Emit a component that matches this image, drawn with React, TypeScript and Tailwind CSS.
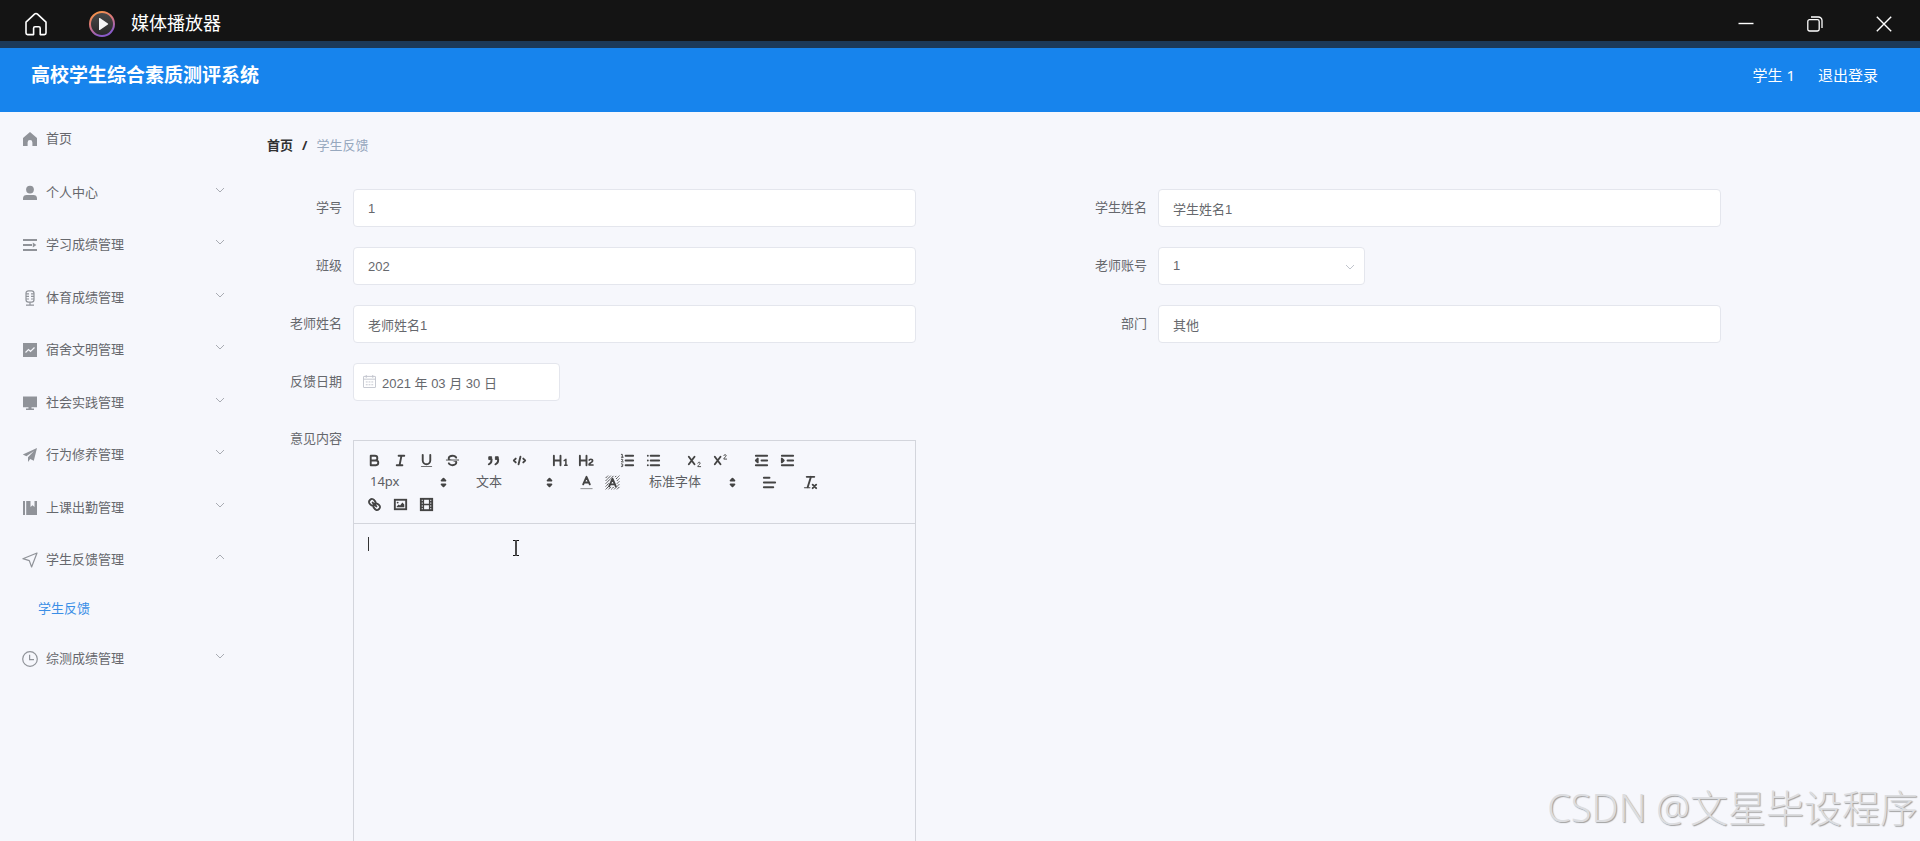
import type { ReactNode } from "react";

const menuIcons: Record<string, ReactNode> = {
  home: <path fill="currentColor" d="M8 1 1 7v8h4.600v-3.600a2.400 2.400 0 0 1 4.800 0V15H15V7z" />,
  user: (
    <g fill="currentColor">
      <circle cx="8" cy="4.600" r="3.900" />
      <path d="M1 15v-1.500C1 11 2.500 10 4.500 10h7c2 0 3.500 1 3.500 3.500V15z" />
    </g>
  ),
  list: (
    <g fill="currentColor">
      <path d="M1 2h14v2H1zM1 12h14v2H1zM1 7h9v2H1zM10.800 5.400 14.400 8l-3.600 2.600z" />
    </g>
  ),
  mic: (
    <g fill="none" stroke="currentColor" strokeWidth="1.200">
      <rect x="4" y=".8" width="8" height="11.400" rx="2.400" />
      <path d="M4 3.800h3M4 6.400h3M4 9h3M12 3.800H9M12 6.400H9M12 9H9M8 12.200v3M4 15.200h8" />
    </g>
  ),
  chart: (
    <g>
      <path fill="currentColor" d="M1 1h14v14H1z" />
      <path fill="none" stroke="#f6f7fc" strokeWidth="1.200" d="m3.500 10.500 3-3 2 2 4-4" />
    </g>
  ),
  screen: <path fill="currentColor" d="M1 1.500h14v10.700H1zM6.500 12h3v1.600H12V15H4v-1.400h2.500z" />,
  plane: <path fill="currentColor" d="M15 1 .8 7.600l3.600 1.700L12 4 6 10.200V15l2.200-3 3.600 1.700z" />,
  book: <path fill="currentColor" d="M1 1h2v14H1zM4.200 1h4.300v6l2-1.700 2 1.700V1H15v14H4.200z" />,
  send: (
    <path fill="none" stroke="currentColor" strokeWidth="1.200" strokeLinejoin="round" d="M15 1 .9 6.700l6.400 1.900L9.600 15z" />
  ),
  clock: (
    <g fill="none" stroke="currentColor" strokeWidth="1.200">
      <circle cx="8" cy="8" r="7.300" />
      <path d="M7.600 3.800v4.800H12" />
    </g>
  ),
};

const menu = [
  { label: "个人中心", icon: "user" },
  { label: "学习成绩管理", icon: "list" },
  { label: "体育成绩管理", icon: "mic" },
  { label: "宿舍文明管理", icon: "chart" },
  { label: "社会实践管理", icon: "screen" },
  { label: "行为修养管理", icon: "plane" },
  { label: "上课出勤管理", icon: "book" },
  { label: "学生反馈管理", icon: "send", open: true },
];

function MenuIcon({ name }: { name: string }) {
  return (
    <svg viewBox="0 0 16 16" className="h-4 w-4 shrink-0 text-[#909399]" aria-hidden="true">
      {menuIcons[name]}
    </svg>
  );
}

function Chevron({ up = false, className = "" }: { up?: boolean; className?: string }) {
  return (
    <svg viewBox="0 0 10 6" className={`h-[6px] w-[10px] ${className}`} fill="none" stroke="currentColor" aria-hidden="true">
      <path d={up ? "M1 5 5 1l4 4" : "m1 1 4 4 4-4"} />
    </svg>
  );
}

function MenuItem({ label, icon, open = false }: { label: string; icon: string; open?: boolean }) {
  return (
    <button type="button" className="flex h-full w-full items-center gap-2 pr-[18px] pl-[22px] text-left">
      <MenuIcon name={icon} />
      <span className="flex-1">{label}</span>
      <Chevron up={open} className="mb-[6px] text-[#a9acb3]" />
    </button>
  );
}

function Field({ id, label, children }: { id: string; label: string; children: ReactNode }) {
  return (
    <div className="flex">
      <label htmlFor={id} className="w-[92px] shrink-0 pr-[11px] text-right leading-[38px]">
        {label}
      </label>
      {children}
    </div>
  );
}

const boxClass = "h-[38px] rounded-[4px] border border-[#e4e6ed] bg-white text-[#66686d] outline-none";

function TextField({ id, label, value }: { id: string; label: string; value: string }) {
  return (
    <Field id={id} label={label}>
      <input id={id} defaultValue={value} className={`w-[563px] min-w-0 px-[14px] ${boxClass}`} />
    </Field>
  );
}

const S = { fill: "none", stroke: "currentColor", strokeWidth: 2, strokeLinecap: "round", strokeLinejoin: "round" } as const;
const T = { ...S, strokeWidth: 1 } as const;

const tools: Record<string, ReactNode> = {
  bold: <path {...S} d="M5 4h4.500a2.500 2.500 0 0 1 0 5H5zM5 9h5.500a2.500 2.500 0 0 1 0 5H5z" />,
  italic: <path {...S} d="M7 4h6M5 14h6M8 14l2-10" />,
  underline: (
    <>
      <path {...S} d="M5 3v6a4 4 0 0 0 8 0V3" />
      <rect x="3" y="15" width="12" height="1" rx=".5" fill="currentColor" />
    </>
  ),
  strike: (
    <>
      <path {...T} d="M15.500 8.500h-13" />
      <path
        fill="currentColor"
        d="M9.007 8C6.542 7.791 6 7.519 6 6.500 6 5.792 7.283 5 9 5c1.571 0 2.765.679 2.969 1.309a1 1 0 0 0 1.900-.617C13.356 4.106 11.354 3 9 3 6.200 3 4 4.538 4 6.500a3.200 3.200 0 0 0 .5 1.843ZM8.984 10C11.457 10.208 12 10.479 12 11.500c0 .708-1.283 1.500-3 1.500-1.571 0-2.765-.679-2.969-1.309a1 1 0 1 0-1.900.617C4.644 13.894 6.646 15 9 15c2.800 0 5-1.538 5-3.500a3.200 3.200 0 0 0-.5-1.843Z"
      />
    </>
  ),
  quote: (
    <>
      <path fill="currentColor" stroke="currentColor" d="M4 5h3v3H4zM11 5h3v3h-3z" />
      <path {...S} d="M7 8c0 4.031-3 5-3 5M14 8c0 4.031-3 5-3 5" />
    </>
  ),
  code: <path {...S} d="m5 7-2 2 2 2M13 7l2 2-2 2M10 5 8 13" />,
  h1: (
    <path
      fill="currentColor"
      d="M10 4v10a1 1 0 0 1-2 0v-4H3v4a1 1 0 0 1-2 0V4a1 1 0 0 1 2 0v4h5V4a1 1 0 0 1 2 0Zm6.068 9.209H15.500V7.600c0-.3-.24-.6-.68-.6-.34 0-1.960 1.300-2.500 1.700-.5.400-.2 1.200.5 1.200.3 0 .7-.3 1.100-.6v3.909h-.6a.8.8 0 0 0 0 1.580h2.748a.8.8 0 0 0 0-1.580Z"
    />
  ),
  h2: (
    <path
      fill="currentColor"
      d="M16.740 13.810a.7.7 0 0 1-.8.700h-4.100c-.7 0-1-.3-1-.9 0-2.700 3.600-2.900 3.600-4.300a.8.8 0 0 0-.9-.8c-1 0-.9.900-1.600.900a.85.85 0 0 1-.9-.8c0-.9 1.200-1.700 2.600-1.700 1.500 0 2.700.9 2.700 2.300 0 2-2.700 2.700-3.200 3.800h2.800c.5 0 .8.300.8.800ZM9 3a1 1 0 0 0-1 1v4H3V4a1 1 0 0 0-2 0v10a1 1 0 0 0 2 0v-4h5v4a1 1 0 0 0 2 0V4a1 1 0 0 0-1-1Z"
    />
  ),
  ordered: (
    <>
      <path {...S} d="M7 4h8M7 9h8M7 14h8" />
      <path {...T} d="M2.500 2.500h1v3M2.500 5.500h2M2.500 7.700c1.800-.8 2.300.8 0 2.800h2M2.500 12.500c2-.3 2 1.500.500 1.500 2 0 1.500 2-.5 1.500" />
    </>
  ),
  bullet: <path {...S} d="M6 4h9M6 9h9M6 14h9M3 4h0M3 9h0M3 14h0" />,
  sub: (
    <>
      <path {...S} d="m3 5 6 8M9 5l-6 8" />
      <path {...T} d="M12.500 11.800c.3-1.400 2.600-1.300 2.500.1 0 1-2.300 1.900-2.500 3.600H15.500" />
    </>
  ),
  sup: (
    <>
      <path {...S} d="m3 5 6 8M9 5l-6 8" />
      <path {...T} d="M12.500 3.800c.3-1.400 2.600-1.300 2.500.1 0 1-2.300 1.900-2.500 3.600H15.500" />
    </>
  ),
  outdent: (
    <>
      <path {...S} d="M3 14h12M3 4h12M9 9h6" />
      <path fill="currentColor" stroke="currentColor" strokeWidth="2" strokeLinejoin="round" d="M5 7v4L3 9z" />
    </>
  ),
  indent: (
    <>
      <path {...S} d="M3 14h12M3 4h12M9 9h6" />
      <path fill="currentColor" stroke="currentColor" strokeWidth="2" strokeLinejoin="round" d="M3 7v4l2-2z" />
    </>
  ),
  color: (
    <>
      <path {...T} opacity=".6" d="M3 15.500h12" />
      <path {...S} d="M5.500 11 9 3l3.500 8M11.600 9H6.400" />
    </>
  ),
  background: (
    <>
      <path
        {...T}
        strokeDasharray="1 1"
        d="M2 4 4 2M2 7l5-5M2 10 10 2M2 13l3-3M2 16l3-3M5 16l2-2M8 16l2-2M11 16l5-5M14 16l2-2M12 3l1-1M13 5l3-3M14 7l2-2M14 10l2-2"
      />
      <path {...S} d="M5.500 13 9 5l3.500 8M11.600 11H6.400" />
    </>
  ),
  align: <path {...S} d="M3 9h12M3 14h10M3 4h6" />,
  clean: (
    <>
      <path {...S} d="M5 3h8M6 14 9.500 3M11.300 11.300l3.700 3.700M15 11.300 11.300 15" />
      <rect x="2" y="14" width="7" height="1" rx=".5" fill="currentColor" />
    </>
  ),
  link: (
    <g {...S}>
      <path d="m7 7 4 4" />
      <path d="M8.900 4.577a3.476 3.476 0 0 1 .36 4.679A3.476 3.476 0 0 1 4.577 8.900C3.185 7.500 2.035 6.400 4.217 4.217S7.500 3.185 8.900 4.577Z" />
      <path d="M13.423 9.100a3.476 3.476 0 0 0-4.679-.36 3.476 3.476 0 0 0 .36 4.679c1.392 1.392 2.500 2.542 4.679.36s1.031-3.279-.36-4.679Z" />
    </g>
  ),
  image: (
    <>
      <rect {...S} x="3" y="4" width="12" height="10" strokeLinejoin="miter" />
      <circle cx="6" cy="7" r="1" fill="currentColor" />
      <path fill="currentColor" d="M5 12v-1l2-2 1.500 1L11 7l2 2v3z" />
    </>
  ),
  video: (
    <>
      <rect {...S} x="3" y="3" width="12" height="12" strokeLinejoin="miter" />
      <path {...T} strokeWidth="1.500" d="M5.700 3v12M12.300 3v12M6 9h6M3 6h2M3 9h2M3 12h2M13 6h2M13 9h2M13 12h2" />
    </>
  ),
};

function Tools({ names }: { names: string[] }) {
  return (
    <div className="flex">
      {names.map((name) => (
        <button key={name} type="button" aria-label={name} className="flex h-[22px] w-[26px] items-center justify-center">
          <svg viewBox="0 0 18 18" className="h-[17px] w-[17px]">
            {tools[name]}
          </svg>
        </button>
      ))}
    </div>
  );
}

function Picker({ label, value, width }: { label: string; value: string; width: string }) {
  return (
    <div className={`relative h-[22px] ${width}`}>
      <select aria-label={label} className="h-5 w-full appearance-none bg-transparent pl-[9px] text-[#5c5e63] outline-none">
        <option>{value}</option>
      </select>
      <svg viewBox="0 0 18 18" className="pointer-events-none absolute top-[3px] right-0 h-[17px] w-[17px]">
        <path fill="currentColor" stroke="currentColor" strokeWidth="2" strokeLinejoin="round" d="m7 11 2 2 2-2zM7 7l2-2 2 2z" />
      </svg>
    </div>
  );
}

function Editor() {
  return (
    <div className="w-[563px] border border-[#d3d5dc]">
      <div className="border-b border-[#d3d5dc] px-[7px] py-2 font-['Noto_Sans','Noto_Sans_CJK_SC',sans-serif] text-[#444]">
        <div className="flex gap-[15px]">
          <Tools names={["bold", "italic", "underline", "strike"]} />
          <Tools names={["quote", "code"]} />
          <Tools names={["h1", "h2"]} />
          <Tools names={["ordered", "bullet"]} />
          <Tools names={["sub", "sup"]} />
          <Tools names={["outdent", "indent"]} />
        </div>
        <div className="flex gap-[15px]">
          <Picker label="字号" value="14px" width="w-[91px]" />
          <Picker label="标题" value="文本" width="w-[91px]" />
          <Tools names={["color", "background"]} />
          <Picker label="字体" value="标准字体" width="w-[101px]" />
          <Tools names={["align"]} />
          <Tools names={["clean"]} />
        </div>
        <div className="flex">
          <Tools names={["link", "image", "video"]} />
        </div>
      </div>
      <div className="relative">
        <textarea id="content" className="block h-[480px] w-full resize-none bg-transparent px-[14px] py-3 outline-none" />
        <span className="absolute top-[13px] left-[14px] h-[14px] w-px bg-[#333]" />
        <svg viewBox="0 0 8 16" className="absolute top-4 left-[158px] h-4 w-2" fill="none" stroke="#111" aria-hidden="true">
          <path d="M1 .5h2.500L4 1l.5-.5H7M1 15.500h2.500L4 15l.5.5H7" />
          <path strokeWidth="1.500" d="M4 1v14" />
        </svg>
      </div>
    </div>
  );
}

function TitleBar() {
  return (
    <div className="flex h-12 shrink-0 items-center border-b-[7px] border-[#1c3a5a] bg-[#141414] pt-[6px] pr-[28px] pl-6 text-white">
      <button type="button" aria-label="主页">
        <svg viewBox="0 0 24 24" className="h-6 w-6" fill="none" stroke="currentColor" strokeWidth="1.600" strokeLinejoin="round">
          <path d="M2 10.200 10.500 2.200a2.200 2.200 0 0 1 3 0L22 10.200V21a1.600 1.600 0 0 1-1.600 1.600h-4.200v-6.400a1.400 1.400 0 0 0-1.400-1.400H11a1.400 1.400 0 0 0-1.400 1.400v6.400H3.600A1.600 1.600 0 0 1 2 21z" />
        </svg>
      </button>
      <svg viewBox="0 0 26 26" className="ml-[41px] h-[26px] w-[26px]" aria-hidden="true">
        <defs>
          <linearGradient id="ring" x1="0" y1="0" x2=".4" y2="1">
            <stop offset="0" stopColor="#ff9a3c" />
            <stop offset=".5" stopColor="#d9777c" />
            <stop offset="1" stopColor="#8a5bc8" />
          </linearGradient>
          <linearGradient id="disc" x1="0" y1="0" x2="0" y2="1">
            <stop offset="0" stopColor="#4a4a4a" />
            <stop offset="1" stopColor="#262626" />
          </linearGradient>
        </defs>
        <circle cx="13" cy="13" r="12" fill="url(#disc)" stroke="url(#ring)" strokeWidth="2" />
        <path fill="#f4f4f4" d="M10 7.600v10.800a.6.6 0 0 0 .9.500l8-5.400a.6.6 0 0 0 0-1l-8-5.400a.6.6 0 0 0-.9.500z" />
      </svg>
      <span className="ml-4 flex-1 text-lg leading-6">媒体播放器</span>
      <div className="flex gap-[53px]">
        <button type="button" aria-label="最小化">
          <svg viewBox="0 0 16 16" className="h-4 w-4" fill="none" stroke="currentColor" strokeWidth="1.400">
            <path d="M.5 7.500h15" />
          </svg>
        </button>
        <button type="button" aria-label="还原">
          <svg viewBox="0 0 16 16" className="h-4 w-4" fill="none" stroke="currentColor" strokeWidth="1.300">
            <rect x=".8" y="3.600" width="11.400" height="11.400" rx="1.800" />
            <path d="M4 1h7.400A3.600 3.600 0 0 1 15 4.600V12" />
          </svg>
        </button>
        <button type="button" aria-label="关闭">
          <svg viewBox="0 0 16 16" className="h-4 w-4" fill="none" stroke="currentColor" strokeWidth="1.400">
            <path d="m.8.8 14.400 14.400M15.200.8.8 15.200" />
          </svg>
        </button>
      </div>
    </div>
  );
}

export default function App() {
  return (
    <div className="relative flex h-screen flex-col overflow-hidden bg-[#f6f7fc] font-['Liberation_Sans','Noto_Sans_CJK_SC',sans-serif] text-[13px] leading-5 text-[#66686d]">
      <TitleBar />

      <header className="flex h-16 shrink-0 items-start justify-between bg-[#1784ed] pt-[15px] pr-[42px] pl-[31px] font-['Noto_Sans','Noto_Sans_CJK_SC',sans-serif] text-white">
        <h1 className="text-[19px] leading-6 font-bold">高校学生综合素质测评系统</h1>
        <div className="flex gap-[23px] text-[15px] leading-6">
          <span>学生 1</span>
          <a href="#logout">退出登录</a>
        </div>
      </header>

      <div className="flex min-h-0 flex-1">
        {/* Sidebar */}
        <nav className="w-[243px] shrink-0">
          <a href="#home" className="flex h-[54px] items-center gap-2 pl-[22px]">
            <MenuIcon name="home" />
            首页
          </a>
          <ul>
            {menu.map((item) => (
              <li key={item.label} className="odd:h-[53px] even:h-[52px]">
                <MenuItem {...item} />
              </li>
            ))}
          </ul>
          <a href="#feedback" className="flex h-[46px] items-center pl-[38px] text-[#3a8ee6]">
            学生反馈
          </a>
          <div className="h-[53px]">
            <MenuItem label="综测成绩管理" icon="clock" />
          </div>
        </nav>

        {/* Feedback form */}
        <main className="min-w-0 flex-1 pr-[49px] pl-[18px]">
          <div className="flex gap-[9px] pt-[23px] pl-[6px] font-['Noto_Sans','Noto_Sans_CJK_SC',sans-serif]">
            <a href="#home" className="font-bold text-[#303133]">
              首页
            </a>
            <span className="font-bold text-[#303133]">/</span>
            <span className="text-[#97a8be]">学生反馈</span>
          </div>

          <form className="mt-[34px] grid grid-cols-2 gap-y-5">
            <TextField id="studentNo" label="学号" value="1" />
            <TextField id="studentName" label="学生姓名" value="学生姓名1" />
            <TextField id="className" label="班级" value="202" />
            <Field id="teacherNo" label="老师账号">
              <div className="relative">
                <select id="teacherNo" className={`w-[207px] appearance-none px-[14px] ${boxClass}`}>
                  <option>1</option>
                </select>
                <Chevron className="pointer-events-none absolute top-[17px] right-[10px] text-[#c0c4cc]" />
              </div>
            </Field>
            <TextField id="teacherName" label="老师姓名" value="老师姓名1" />
            <TextField id="department" label="部门" value="其他" />
            <Field id="date" label="反馈日期">
              <div className="relative">
                <input id="date" defaultValue="2021 年 03 月 30 日" className={`w-[207px] pr-3 pl-7 ${boxClass}`} />
                <svg
                  viewBox="0 0 14 14"
                  className="absolute top-3 left-[10px] h-[13px] w-[13px]"
                  fill="none"
                  stroke="#c0c4cc"
                  aria-hidden="true"
                >
                  <rect x=".5" y="1.500" width="13" height="12" rx=".5" />
                  <path d="M.5 4.500h13M3.500 0v3M10.500 0v3M3 7.500h2M6 7.500h2M9 7.500h2M3 10.500h2M6 10.500h2M9 10.500h2" />
                </svg>
              </div>
            </Field>
            <div className="col-span-2 flex">
              <label htmlFor="content" className="w-[92px] shrink-0 pr-[11px] text-right leading-9">
                意见内容
              </label>
              <div className="pt-[19px]">
                <Editor />
              </div>
            </div>
          </form>
        </main>
      </div>

      <div className="pointer-events-none absolute right-[2px] bottom-[6px] font-['Noto_Sans','Noto_Sans_CJK_SC',sans-serif] text-[38px] leading-[56px] font-light text-[#dcdde0] [text-shadow:1px_1px_1px_#a0a0a0]">
        CSDN @文星毕设程序
      </div>
    </div>
  );
}
